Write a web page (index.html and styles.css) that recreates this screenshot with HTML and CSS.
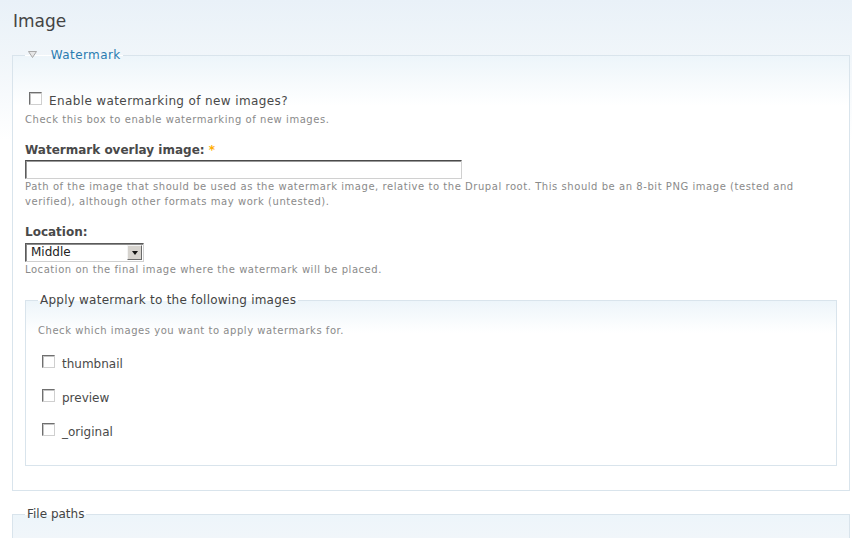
FILE: index.html
```html
<!DOCTYPE html>
<html lang="en">
<head>
  <meta charset="UTF-8" />
  <title>Image settings</title>
  <link rel="stylesheet" href="styles.css">
</head>
<body>
  <h2 class="page-title">Image</h2>

  <form id="imageSettings">
    <fieldset class="collapsible">
      <legend>
        <svg class="toggle" width="9" height="7" viewBox="0 0 9 7"><polygon points="0.5,0.5 8.5,0.5 4.5,6.5" fill="#e6e6e6" stroke="#a9a9a9" stroke-width="1"/></svg>
        <a href="#">Watermark</a>
      </legend>

      <div class="form-item">
        <label class="option wide"><input type="checkbox" name="watermark"> Enable watermarking of new images?</label>
        <div class="description spaced">Check this box to enable watermarking of new images.</div>
      </div>

      <div class="form-item">
        <label class="field tight" for="overlay">Watermark overlay image: <span class="form-required">*</span></label>
        <input type="text" id="overlay" name="overlay" class="form-text">
        <div class="description">Path of the image that should be used as the watermark image, relative to the Drupal root. This should be an 8-bit PNG image (tested and verified), although other formats may work (untested).</div>
      </div>

      <div class="form-item">
        <label class="field" for="location">Location:</label>
        <div class="select-wrap">
          <select id="location" name="location" class="form-select">
            <option>Middle</option>
            <option>Top left</option>
            <option>Top right</option>
            <option>Bottom left</option>
            <option>Bottom right</option>
          </select>
          <span class="select-btn"><span class="arrow"></span></span>
        </div>
        <div class="description">Location on the final image where the watermark will be placed.</div>
      </div>

      <fieldset class="inner">
        <legend>Apply watermark to the following images</legend>
        <div class="description">Check which images you want to apply watermarks for.</div>
        <div class="checkboxes">
          <div class="form-item">
            <label class="option"><input type="checkbox" name="sizes[]" value="thumbnail"> thumbnail</label>
          </div>
          <div class="form-item">
            <label class="option"><input type="checkbox" name="sizes[]" value="preview"> preview</label>
          </div>
          <div class="form-item">
            <label class="option"><input type="checkbox" name="sizes[]" value="_original"> _original</label>
          </div>
        </div>
      </fieldset>
    </fieldset>

    <fieldset class="collapsed">
      <legend>File paths</legend>
    </fieldset>
  </form>
</body>
</html>
```

FILE: styles.css
```css
* {
  box-sizing: border-box;
}

body {
  margin: 0;
  padding: 0 2px 0 12px;
  font-family: 'DejaVu Sans', Verdana, sans-serif;
  font-size: 12px;
  color: #494949;
  background: #fff linear-gradient(#e9f1f8 0, #f1f6fa 60px, #fff 140px) no-repeat;
  height: 538px;
  overflow: hidden;
}

.page-title {
  margin: 0;
  padding: 9px 0 0 1px;
  font-size: 17px;
  line-height: 24px;
  font-weight: normal;
  color: #444;
}

fieldset {
  margin: 14px 0 0;
  padding: 15px 12px 9px;
  border: 1px solid #d9e4ec;
  background: #fff linear-gradient(#edf5fa 0, #fff 50px) no-repeat;
  min-width: 0;
}

legend {
  padding: 0 2px;
  line-height: 16px;
  color: #444;
}

legend .toggle {
  margin: 0 10px 0 1px;
  vertical-align: 1px;
}

legend a {
  color: #2a7cb0;
  text-decoration: none;
  letter-spacing: 0.4px;
}

.form-item {
  margin: 15px 0;
}

label.field {
  display: block;
  font-weight: bold;
  line-height: 16px;
  margin-bottom: 3px;
}

label.field.tight {
  margin-bottom: 2px;
}

label.option {
  display: flex;
  align-items: flex-start;
  line-height: 16px;
}

label.wide {
  letter-spacing: 0.38px;
}

.form-required {
  color: #ffae00;
}

input[type="checkbox"] {
  -webkit-appearance: none;
  appearance: none;
  width: 13px;
  height: 13px;
  margin: -1px 7px 0 4px;
  border: 1px solid;
  border-color: #6f6f6f #cfcfcf #cfcfcf #6f6f6f;
  box-shadow: inset 1px 1px 0 #c4c4c4;
  background: #fff;
  flex-shrink: 0;
}

.description {
  font-size: 10px;
  line-height: 15px;
  color: #8a8a8a;
  letter-spacing: 0.55px;
}

.description.spaced {
  margin-top: 3px;
}

.form-text {
  display: block;
  width: 437px;
  height: 19px;
  margin: 0;
  padding: 1px 3px;
  border: 1px solid;
  border-color: #4a4a4a #d0d0d0 #d0d0d0 #5c5c5c;
  box-shadow: inset 1px 1px 0 #9a9a9a;
  font-family: inherit;
  font-size: 12px;
  background: #fff;
}

.select-wrap {
  position: relative;
  width: 119px;
  height: 19px;
}

.form-select {
  -webkit-appearance: none;
  appearance: none;
  width: 119px;
  height: 19px;
  margin: 0;
  padding: 0 0 0 5px;
  border: 1px solid;
  border-color: #5a5a5a #d0d0d0 #d0d0d0 #5a5a5a;
  box-shadow: inset 1px 1px 0 #8c8c8c;
  font-family: inherit;
  font-size: 12px;
  line-height: 17px;
  color: #222;
  background: #fff;
}

.select-btn {
  position: absolute;
  top: 2px;
  right: 2px;
  width: 15px;
  height: 15px;
  background: #d6d3ce;
  border: 1px solid;
  border-color: #f4f4f4 #6a6a6a #6a6a6a #f4f4f4;
  display: flex;
  align-items: center;
  justify-content: center;
  pointer-events: none;
}

.select-btn .arrow {
  width: 0;
  height: 0;
  border-left: 3px solid transparent;
  border-right: 3px solid transparent;
  border-top: 4px solid #111;
}

fieldset.inner {
  margin: 14px 0 15px;
  padding: 15px 12px 7px;
  background: #fff linear-gradient(#edf5fa 0, #fff 32px) no-repeat;
}

fieldset.inner legend {
  letter-spacing: 0.23px;
}

.checkboxes .form-item {
  margin: 18px 0;
}

fieldset.collapsed {
  margin-top: 15px;
  height: 33px;
  padding: 0 12px;
  border-bottom: none;
  background: linear-gradient(#edf5fa, #f1f6fa);
}
```
